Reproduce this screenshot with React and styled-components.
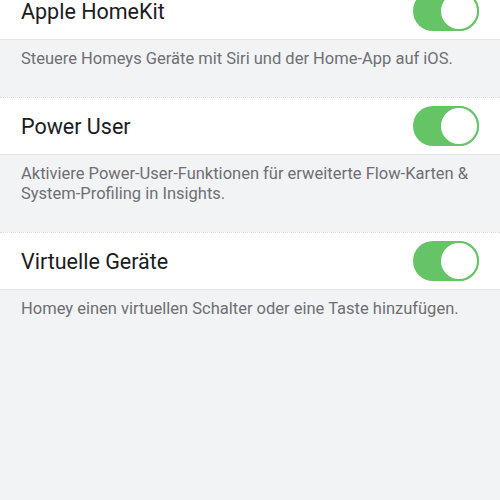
import styled, { createGlobalStyle } from "styled-components";

const GlobalStyle = createGlobalStyle`
  html, body {
    margin: 0;
    padding: 0;
    background: #f2f3f5;
    font-family: Roboto, "Liberation Sans", sans-serif;
    overflow: hidden;
  }
`;

const List = styled.div`
  display: flex;
  flex-direction: column;
  margin-top: -18px;
`;

const Section = styled.section`
  display: flex;
  flex-direction: column;
`;

const Row = styled.div`
  display: flex;
  align-items: center;
  justify-content: space-between;
  height: 56px;
  padding: 0 21px;
  background: #fff;
  border-top: 1px dotted #d9dadd;
  border-bottom: 1px solid #e3e4e7;
`;

const Title = styled.div`
  font-size: 21.5px;
  color: #1b1b1d;
`;

const Description = styled.p`
  margin: 0;
  padding: 9px 10px 28px 21px;
  font-size: 16.5px;
  line-height: 20px;
  color: #6e6f73;
`;

const Track = styled.button`
  position: relative;
  width: 66px;
  height: 40px;
  padding: 0;
  border: none;
  border-radius: 20px;
  background: ${(p) => (p.$on ? "#65c466" : "#e5e5ea")};
  cursor: pointer;
`;

const Knob = styled.span`
  position: absolute;
  top: 0;
  left: ${(p) => (p.$on ? "26px" : "0")};
  width: 36px;
  height: 36px;
  border-radius: 50%;
  background: #fff;
  border: 2px solid #65c466;
`;

function Toggle({ on }) {
  return (
    <Track $on={on}>
      <Knob $on={on} />
    </Track>
  );
}

const settings = [
  {
    title: "Apple HomeKit",
    text: "Steuere Homeys Geräte mit Siri und der Home-App auf iOS.",
  },
  {
    title: "Power User",
    text: "Aktiviere Power-User-Funktionen für erweiterte Flow-Karten & System-Profiling in Insights.",
  },
  {
    title: "Virtuelle Geräte",
    text: "Homey einen virtuellen Schalter oder eine Taste hinzufügen.",
  },
];

export default function App() {
  return (
    <>
      <GlobalStyle />
      <List>
        {settings.map((s) => (
          <Section key={s.title}>
            <Row>
              <Title>{s.title}</Title>
              <Toggle on />
            </Row>
            <Description>{s.text}</Description>
          </Section>
        ))}
      </List>
    </>
  );
}
